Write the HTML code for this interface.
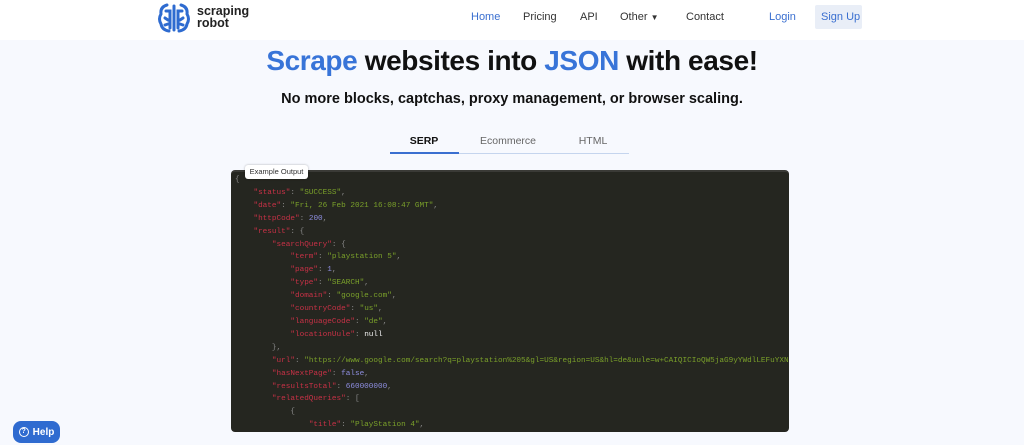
<!DOCTYPE html>
<html><head><meta charset="utf-8"><style>
*{margin:0;padding:0;box-sizing:border-box}
body{width:1024px;height:445px;overflow:hidden;background:#f7f9fe;font-family:"Liberation Sans",sans-serif;position:relative}
.hdr{position:absolute;left:0;top:0;width:1024px;height:40px;background:#fff}
.abs{position:absolute;white-space:nowrap}
.nav{font-size:11px;color:#333;top:11px}
.blue{color:#3a6fd0}
.title{left:0;width:1024px;text-align:center;top:45px;font-size:28px;font-weight:bold;color:#111;letter-spacing:-0.4px}
.title span{color:#3874d8}
.sub{left:0;width:1024px;text-align:center;top:91px;font-size:14.5px;font-weight:bold;color:#111}
.tab{top:135px;font-size:10.5px;color:#666;width:70px;text-align:center}
.code{position:absolute;left:231px;top:170px;width:558px;height:262px;background:#252620;border-radius:4px;overflow:hidden;border-top:2px solid #3a3a36}
pre{position:absolute;left:4px;top:2px;font-family:"Liberation Mono",monospace;font-size:7.7px;line-height:12.9px;color:#888}
.k{color:#c73146}.s{color:#7aa02a}.n{color:#8e8ee0}.w{color:#f0f0f0}
</style></head><body>
<div class="hdr"></div>
<svg class="abs" style="left:157px;top:2px" width="34" height="31" viewBox="0 0 34 31">
<g fill="none" stroke="#2e6bd0" stroke-width="3" stroke-linecap="round">
<path d="M10 3 Q3 5 4 12 Q1 17 4 22 Q5 28 12 29"/><path d="M24 3 Q31 5 30 12 Q33 17 30 22 Q29 28 22 29"/>
<path d="M9 9 L13 9 L13 26"/><path d="M8 16 L11 18"/><path d="M8 23 L11 22"/>
<path d="M25 9 L21 9 L21 26"/><path d="M26 16 L23 18"/><path d="M26 23 L23 22"/><path d="M17 4 L17 28"/>
</g></svg>
<div class="abs" style="left:197px;top:5px;font-size:12.5px;line-height:12px;color:#222;font-weight:bold">scraping<br>robot</div>
<div class="abs nav blue" style="left:471px">Home</div>
<div class="abs nav" style="left:523px">Pricing</div>
<div class="abs nav" style="left:580px">API</div>
<div class="abs nav" style="left:620px">Other <span style="font-size:8px">▼</span></div>
<div class="abs nav" style="left:686px">Contact</div>
<div class="abs nav blue" style="left:769px">Login</div>
<div class="abs" style="left:815px;top:5px;width:47px;height:24px;background:#e9eef7;border-radius:2px"></div>
<div class="abs nav blue" style="left:821px">Sign Up</div>
<div class="abs title"><span>Scrape</span> websites into <span>JSON</span> with ease!</div>
<div class="abs sub">No more blocks, captchas, proxy management, or browser scaling.</div>
<div class="abs tab" style="left:389px;color:#111;font-weight:bold">SERP</div>
<div class="abs tab" style="left:473px">Ecommerce</div>
<div class="abs tab" style="left:558px">HTML</div>
<div class="abs" style="left:390px;top:153px;width:239px;height:1px;background:#c5d5ee"></div>
<div class="abs" style="left:390px;top:152px;width:69px;height:2px;background:#3a6fd0"></div>
<div class="code"><pre>{
    <span class="k">"status"</span>: <span class="s">"SUCCESS"</span>,
    <span class="k">"date"</span>: <span class="s">"Fri, 26 Feb 2021 16:08:47 GMT"</span>,
    <span class="k">"httpCode"</span>: <span class="n">200</span>,
    <span class="k">"result"</span>: {
        <span class="k">"searchQuery"</span>: {
            <span class="k">"term"</span>: <span class="s">"playstation 5"</span>,
            <span class="k">"page"</span>: <span class="n">1</span>,
            <span class="k">"type"</span>: <span class="s">"SEARCH"</span>,
            <span class="k">"domain"</span>: <span class="s">"google.com"</span>,
            <span class="k">"countryCode"</span>: <span class="s">"us"</span>,
            <span class="k">"languageCode"</span>: <span class="s">"de"</span>,
            <span class="k">"locationUule"</span>: <span class="w">null</span>
        },
        <span class="k">"url"</span>: <span class="s">"https://www.google.com/search?q=playstation%205&amp;gl=US&amp;region=US&amp;hl=de&amp;uule=w+CAIQICIoQW5jaG9yYWdlLEFuYXN</span>
        <span class="k">"hasNextPage"</span>: <span class="n">false</span>,
        <span class="k">"resultsTotal"</span>: <span class="n">660000000</span>,
        <span class="k">"relatedQueries"</span>: [
            {
                <span class="k">"title"</span>: <span class="s">"PlayStation 4"</span>,
                <span class="k">"link"</span>: <span class="s">"https://www.google.com/search?q=PlayStation+4&amp;gl=US&amp;hl=de"</span>,</pre></div>
<div class="abs" style="left:245px;top:165px;width:63px;height:14px;background:#fff;border-radius:3px;box-shadow:0 0 2px rgba(0,0,0,.3);font-size:7.5px;color:#333;text-align:center;line-height:14px">Example Output</div>
<div class="abs" style="left:13px;top:421px;width:47px;height:22px;background:#2f6bd0;border-radius:8px;color:#fff;font-size:10px;font-weight:bold;display:flex;align-items:center;justify-content:center;gap:4px"><span style="display:inline-block;width:10px;height:10px;border:1.3px solid #fff;border-radius:50%;font-size:7px;line-height:8px;text-align:center">?</span><span>Help</span></div>
</body></html>
